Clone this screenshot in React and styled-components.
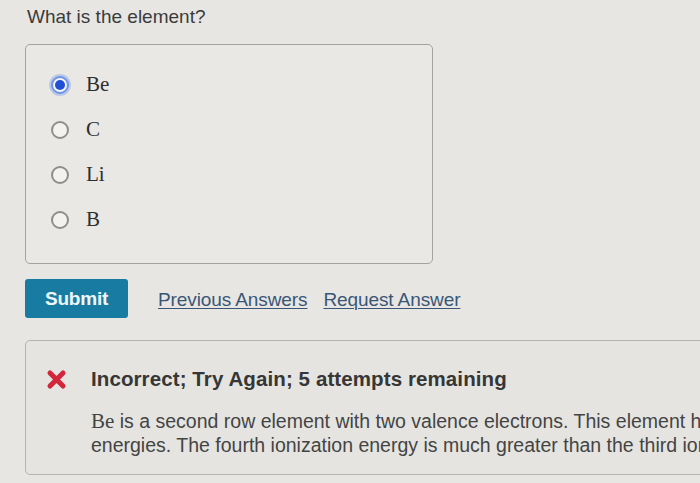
import React from "react";
import styled, { createGlobalStyle } from "styled-components";

const Global = createGlobalStyle`
  html, body { margin: 0; padding: 0; background: #e7e6e3; overflow: hidden; }
  body { width: 700px; height: 483px; font-family: "Liberation Sans", Arial, sans-serif; color: #3a3a3a; }
`;

const Page = styled.div`
  padding: 5px 0 0 25px;
  width: 900px;
`;

const Title = styled.div`
  font-size: 19px;
  line-height: 24px;
  padding-left: 2px;
  color: #3b3b3b;
`;

const ChoiceBox = styled.div`
  margin-top: 15px;
  width: 408px;
  height: 220px;
  box-sizing: border-box;
  border: 1.5px solid #a3a3a1;
  border-radius: 5px;
  background: #e9e8e5;
  padding: 17px 0 0 25px;
`;

const Row = styled.label`
  display: flex;
  align-items: center;
  height: 45px;
  gap: 17px;
`;

const Radio = styled.span`
  width: 18px;
  height: 18px;
  box-sizing: border-box;
  border-radius: 50%;
  display: inline-flex;
  align-items: center;
  justify-content: center;
  border: ${(p) => (p.$checked ? "2px solid #6f93e6" : "2px solid #8e8e8c")};
  background: ${(p) => (p.$checked ? "#f4f6fb" : "#f3f2ef")};
  box-shadow: ${(p) => (p.$checked ? "0 0 0 2px rgba(150,175,235,0.55)" : "none")};
  &::after {
    content: "";
    display: ${(p) => (p.$checked ? "block" : "none")};
    width: 10px;
    height: 10px;
    border-radius: 50%;
    background: #1f4fd3;
  }
`;

const Label = styled.span`
  font-family: "Liberation Serif", "Times New Roman", serif;
  font-size: 21px;
  color: #2e2e2e;
`;

const Actions = styled.div`
  margin-top: 15px;
  display: flex;
  align-items: center;
  gap: 30px;
`;

const SubmitButton = styled.button`
  width: 103px;
  height: 39px;
  border: none;
  border-radius: 3px;
  background: #187ba2;
  color: #eef6fa;
  font-family: "Liberation Sans", Arial, sans-serif;
  font-weight: bold;
  font-size: 19px;
  letter-spacing: -0.2px;
  padding: 0;
`;

const Links = styled.div`
  display: flex;
  gap: 16px;
  padding-top: 2px;
`;

const LinkText = styled.a`
  font-size: 19px;
  color: #3a5676;
  text-decoration: underline;
  text-underline-offset: 2px;
  text-decoration-thickness: 1px;
  letter-spacing: -0.1px;
`;

const Feedback = styled.div`
  margin-top: 22px;
  width: 780px;
  height: 135px;
  box-sizing: border-box;
  border: 1.5px solid #b3b3b1;
  border-radius: 5px;
  background: #e5e4e1;
  padding: 25px 0 0 20px;
`;

const Heading = styled.div`
  display: flex;
  align-items: center;
  gap: 24px;
  height: 26px;
`;

const HeadingText = styled.span`
  font-weight: bold;
  font-size: 20.5px;
  color: #363636;
  letter-spacing: 0.1px;
`;

const Body = styled.div`
  margin-top: 17px;
  padding-left: 45px;
  font-size: 19.5px;
  line-height: 24px;
  color: #444;
  white-space: nowrap;
`;

const Math = styled.span`
  font-family: "Liberation Serif", "Times New Roman", serif;
  font-size: 21px;
`;

const Cross = () => (
  <svg width="21" height="21" viewBox="0 0 21 21">
    <path d="M4 4 L17 17 M17 4 L4 17" stroke="#d3263a" strokeWidth="5" strokeLinecap="round" />
  </svg>
);

const options = ["Be", "C", "Li", "B"];

export default function App() {
  return (
    <>
      <Global />
      <Page>
        <Title>What is the element?</Title>
        <ChoiceBox>
          {options.map((o, i) => (
            <Row key={o}>
              <Radio $checked={i === 0} />
              <Label>{o}</Label>
            </Row>
          ))}
        </ChoiceBox>
        <Actions>
          <SubmitButton>Submit</SubmitButton>
          <Links>
            <LinkText>Previous Answers</LinkText>
            <LinkText>Request Answer</LinkText>
          </Links>
        </Actions>
        <Feedback>
          <Heading>
            <Cross />
            <HeadingText>Incorrect; Try Again; 5 attempts remaining</HeadingText>
          </Heading>
          <Body>
            <div><Math>Be</Math> is a second row element with two valence electrons. This element has three low ionization</div>
            <div>energies. The fourth ionization energy is much greater than the third ionization energy.</div>
          </Body>
        </Feedback>
      </Page>
    </>
  );
}
